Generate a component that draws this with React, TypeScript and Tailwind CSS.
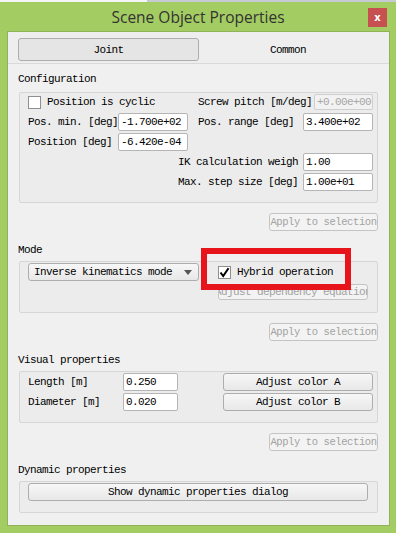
import React from "react";

const mono =
  "font-['Liberation_Mono',monospace] text-[11px] leading-[12px] tracking-[-0.6px] text-black whitespace-nowrap";

function Field({ value, w, disabled }: { value: string; w: string; disabled?: boolean }) {
  return (
    <div
      className={`${w} flex shrink-0 items-center rounded-[2px] border px-[2px] ${
        disabled ? "h-[16px] border-[#cfcfcf] bg-[#f2f2f2] text-[#a6a6a6]" : "h-[18px] border-[#b5b5b5] bg-white"
      }`}
    >
      {value}
    </div>
  );
}

function Btn({
  label,
  w,
  h = "h-[18px]",
  disabled,
  clip,
}: {
  label: string;
  w: string;
  h?: string;
  disabled?: boolean;
  clip?: boolean;
}) {
  return (
    <div
      className={`${w} ${h} flex shrink-0 items-center justify-center rounded-[3px] border ${clip ? "overflow-hidden" : ""} ${
        disabled
          ? "border-[#c4c4c4] bg-[#f3f3f3] text-[#a2a2a2]"
          : "border-[#adadad] bg-gradient-to-b from-[#f7f7f7] to-[#e8e8e8]"
      }`}
    >
      <span className="shrink-0">{label}</span>
    </div>
  );
}

function Check({ checked }: { checked?: boolean }) {
  return (
    <div className="flex h-[13px] w-[13px] shrink-0 items-center justify-center border border-[#8f8f8f] bg-white">
      {checked && (
        <svg width="11" height="11" viewBox="0 0 11 11">
          <path d="M1.5 5.5 L4.2 9 L9.5 1.2" fill="none" stroke="#000" strokeWidth="2" />
        </svg>
      )}
    </div>
  );
}

function Group({ h, children }: { h: string; children: React.ReactNode }) {
  return (
    <div className={`${h} rounded-[2px] border border-[#d6d6d6] bg-[#ececec] pl-[8px]`}>{children}</div>
  );
}

function Apply() {
  return (
    <div className="flex justify-end">
      <div className="flex h-[18px] w-[109px] items-center justify-center rounded-[3px] border border-[#c4c4c4] bg-[#f3f3f3] text-[10.5px] tracking-[-0.4px] text-[#a2a2a2]">
        Apply to selection
      </div>
    </div>
  );
}

export default function App() {
  return (
    <div className={`relative flex h-[533px] w-[396px] flex-col overflow-hidden bg-[#a3cc62] ${mono}`}>
      {/* strip of the window behind */}
      <div className="flex h-[2px]">
        <div className="w-[147px] bg-[#f4f4f4]" />
        <div className="flex-1 bg-[#c6cad2]" />
      </div>

      {/* title bar */}
      <div className="grid h-[30px] grid-cols-[1fr_auto_1fr] items-start">
        <div />
        <div className="pt-[4px] font-['Open_Sans',sans-serif] text-[15.5px] leading-[22px] tracking-normal text-[#333]">
          Scene Object Properties
        </div>
        <div className="flex justify-end pr-[9px] pt-[6px]">
          <div className="flex h-[19px] w-[19px] items-center justify-center bg-[#c75050] font-['DejaVu_Sans',sans-serif] text-[10px] font-bold leading-none tracking-normal text-white">
            x
          </div>
        </div>
      </div>

      {/* client area */}
      <div className="ml-[8px] h-[493px] w-[381px] bg-[#f0f0f0] shadow-[0_0_0_1px_#8fb356]">
        {/* tabs */}
        <div className="flex h-[32px] border-b border-[#d9d9d9] bg-[#eeeeee] pl-[10px] pt-[6px]">
          <div className="flex h-[23px] w-[181px] items-center justify-center rounded-[3px] border border-[#adadad] bg-[#e5e5e5]">
            Joint
          </div>
          <div className="flex h-[23px] flex-1 items-center justify-center pr-[12px]">Common</div>
        </div>

        <div className="flex flex-col px-[11px]">
          {/* Configuration */}
          <div className="-ml-[1px] mt-[9px] h-[12px]">Configuration</div>
          <div className="mt-[7px]">
            <Group h="h-[111px]">
              <div className="flex h-[18px] items-center">
                <div className="flex w-[170px] shrink-0 items-center">
                  <Check />
                  <span className="ml-[6px]">Position is cyclic</span>
                </div>
                <span className="w-[116px] shrink-0">Screw pitch [m/deg]</span>
                <Field value="+0.00e+00" w="w-[59px]" disabled />
              </div>
              <div className="mt-[2px] flex h-[18px] items-center">
                <span className="w-[90px] shrink-0">Pos. min. [deg]</span>
                <Field value="-1.700e+02" w="w-[70px]" />
                <span className="ml-[10px] w-[105px] shrink-0">Pos. range [deg]</span>
                <Field value="3.400e+02" w="w-[70px]" />
              </div>
              <div className="mt-[2px] flex h-[18px] items-center">
                <span className="w-[90px] shrink-0">Position [deg]</span>
                <Field value="-6.420e-04" w="w-[70px]" />
              </div>
              <div className="mt-[2px] flex h-[18px] items-center pl-[150px]">
                <span className="w-[125px] shrink-0">IK calculation weigh</span>
                <Field value="1.00" w="w-[70px]" />
              </div>
              <div className="mt-[2px] flex h-[18px] items-center pl-[150px]">
                <span className="w-[125px] shrink-0">Max. step size [deg]</span>
                <Field value="1.00e+01" w="w-[70px]" />
              </div>
            </Group>
          </div>
          <div className="mt-[10px]">
            <Apply />
          </div>

          {/* Mode */}
          <div className="-ml-[1px] mt-[13px] h-[12px]">Mode</div>
          <div className="mt-[5px]">
            <Group h="h-[52px]">
              <div className="mt-[1px] flex h-[18px] items-center">
                <div className="flex h-[18px] w-[171px] shrink-0 items-center justify-between rounded-[3px] border border-[#adadad] bg-gradient-to-b from-[#f7f7f7] to-[#e8e8e8] pl-[5px] pr-[6px]">
                  <span>Inverse kinematics mode</span>
                  <svg width="8" height="5" viewBox="0 0 8 5">
                    <path d="M0 0 H8 L4 5 Z" fill="#555" />
                  </svg>
                </div>
                <div className="ml-[19px] flex items-center">
                  <Check checked />
                  <span className="ml-[6px]">Hybrid operation</span>
                </div>
              </div>
              <div className="mt-[3px] pl-[190px]">
                <Btn label="Adjust dependency equation" w="w-[150px]" h="h-[16px]" disabled clip />
              </div>
            </Group>
          </div>
          <div className="mt-[10px]">
            <Apply />
          </div>

          {/* Visual properties */}
          <div className="-ml-[1px] mt-[13px] h-[12px]">Visual properties</div>
          <div className="mt-[5px]">
            <Group h="h-[52px]">
              <div className="mt-[1px] flex h-[18px] items-center">
                <span className="w-[95px] shrink-0">Length [m]</span>
                <Field value="0.250" w="w-[55px]" />
                <div className="ml-[45px]">
                  <Btn label="Adjust color A" w="w-[150px]" />
                </div>
              </div>
              <div className="mt-[2px] flex h-[18px] items-center">
                <span className="w-[95px] shrink-0">Diameter [m]</span>
                <Field value="0.020" w="w-[55px]" />
                <div className="ml-[45px]">
                  <Btn label="Adjust color B" w="w-[150px]" />
                </div>
              </div>
            </Group>
          </div>
          <div className="mt-[10px]">
            <Apply />
          </div>

          {/* Dynamic properties */}
          <div className="-ml-[1px] mt-[13px] h-[12px]">Dynamic properties</div>
          <div className="mt-[5px]">
            <Group h="h-[32px]">
              <div className="mt-[1px]">
                <Btn label="Show dynamic properties dialog" w="w-[340px]" />
              </div>
            </Group>
          </div>
        </div>
      </div>

      {/* red annotation box */}
      <div className="absolute left-[201px] top-[248px] h-[42px] w-[150px] border-[6px] border-[#e8141c]" />
    </div>
  );
}
